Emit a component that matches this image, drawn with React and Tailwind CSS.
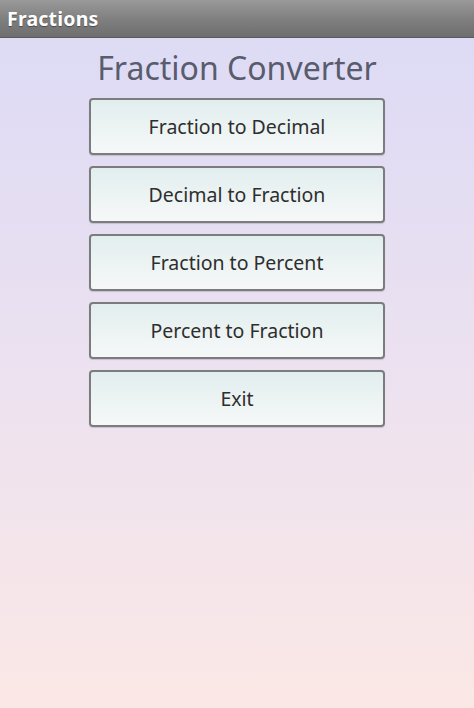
export default function App() {
  const items = ["Fraction to Decimal", "Decimal to Fraction", "Fraction to Percent", "Percent to Fraction", "Exit"];
  return (
    <div className="w-[474px] h-[708px] flex flex-col bg-gradient-to-b from-[#dcdaf6] via-[#ebe1f0] to-[#fbe8e6]" style={{ fontFamily: '"Noto Sans", "Open Sans", sans-serif' }}>
      <div className="h-[38px] flex items-center px-[7px] bg-gradient-to-b from-[#9a9a9a] via-[#808080] to-[#6e6e6e] border-b border-[#5a5a5a]">
        <span className="text-white font-bold text-[19.5px] leading-none tracking-[0.2px] [text-shadow:0_1px_1px_rgba(0,0,0,0.4)]">Fractions</span>
      </div>
      <div className="flex flex-col items-center">
        <div className="mt-[10px] h-[40px] flex items-center text-[32px] leading-none text-[#585c6c]">Fraction Converter</div>
        <div className="mt-[10px] flex flex-col gap-[11px]">
          {items.map((t) => (
            <div key={t} className="w-[296px] h-[57px] rounded-[4px] border-2 border-[#7a7c7e] bg-gradient-to-b from-[#e2eeee] to-[#f6f8f8] flex items-center justify-center text-[19.5px] text-[#2e2e2e] shadow-[0_1px_1px_rgba(0,0,0,0.15)]">
              {t}
            </div>
          ))}
        </div>
      </div>
    </div>
  );
}
